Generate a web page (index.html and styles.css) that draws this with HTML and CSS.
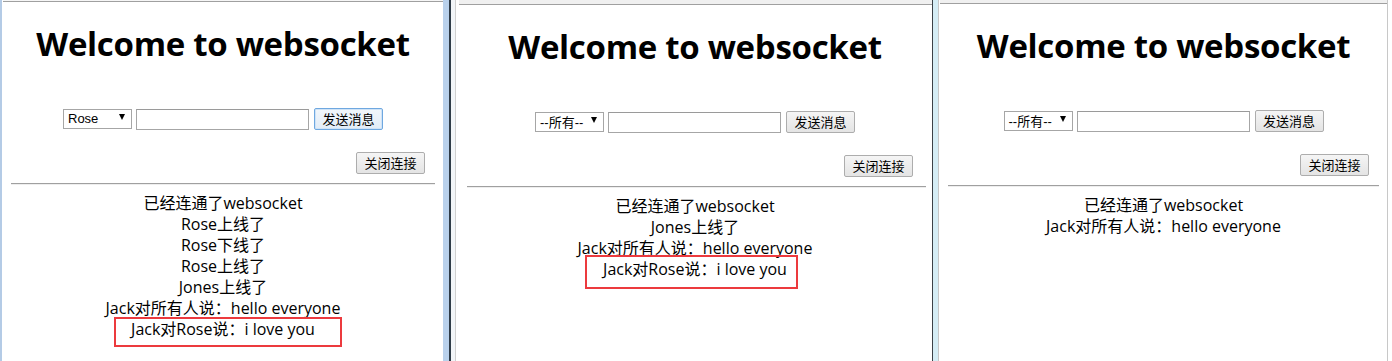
FILE: index.html
```html
<!DOCTYPE html>
<html lang="zh-CN">
<head>
<meta charset="utf-8">
<title>websocket</title>
<link rel="stylesheet" href="styles.css">
</head>
<body>
<div class="screen">
  <div class="edge-left"></div>

  <section class="page page-1">
    <div class="bar bar-1"></div>
    <div class="content">
      <h1 class="title">Welcome to websocket</h1>
      <div class="controls">
        <div class="select"><span class="select-text">Rose</span><span class="arrow"></span></div>
        <div class="input"></div>
        <div class="btn btn-focus">发送消息</div>
      </div>
      <div class="close-row"><div class="btn">关闭连接</div></div>
      <div class="rule"></div>
      <div class="messages">
        <div class="msg">已经连通了websocket</div>
        <div class="msg">Rose上线了</div>
        <div class="msg">Rose下线了</div>
        <div class="msg">Rose上线了</div>
        <div class="msg">Jones上线了</div>
        <div class="msg">Jack对所有人说：hello everyone</div>
        <div class="msg">Jack对Rose说：i love you</div>
      </div>
    </div>
    <div class="mark mark-1"></div>
  </section>

  <div class="sep sep-1"></div>

  <section class="page page-2">
    <div class="bar bar-2"></div>
    <div class="content">
      <h1 class="title">Welcome to websocket</h1>
      <div class="controls">
        <div class="select"><span class="select-text">--所有--</span><span class="arrow"></span></div>
        <div class="input"></div>
        <div class="btn">发送消息</div>
      </div>
      <div class="close-row"><div class="btn">关闭连接</div></div>
      <div class="rule"></div>
      <div class="messages">
        <div class="msg">已经连通了websocket</div>
        <div class="msg">Jones上线了</div>
        <div class="msg">Jack对所有人说：hello everyone</div>
        <div class="msg">Jack对Rose说：i love you</div>
      </div>
    </div>
    <div class="mark mark-2"></div>
  </section>

  <div class="sep sep-2"></div>

  <section class="page page-3">
    <div class="bar bar-3"></div>
    <div class="content">
      <h1 class="title">Welcome to websocket</h1>
      <div class="controls">
        <div class="select"><span class="select-text">--所有--</span><span class="arrow"></span></div>
        <div class="input"></div>
        <div class="btn">发送消息</div>
      </div>
      <div class="close-row"><div class="btn">关闭连接</div></div>
      <div class="rule"></div>
      <div class="messages">
        <div class="msg">已经连通了websocket</div>
        <div class="msg">Jack对所有人说：hello everyone</div>
      </div>
    </div>
  </section>

  <div class="edge-right"></div>
</div>
</body>
</html>
```

FILE: styles.css
```css
html, body {
  margin: 0;
  padding: 0;
  background: #ffffff;
}

.screen {
  display: flex;
  width: 1392px;
  height: 361px;
  overflow: hidden;
  font-family: "Open Sans", "Noto Sans CJK SC", sans-serif;
  color: #000;
}

.edge-left {
  flex: 0 0 3px;
  background: linear-gradient(to right, #b4cbe6 0, #b4cbe6 2px, #ffffff 2px);
}

.edge-right {
  flex: 0 0 5px;
  background: linear-gradient(to right, #c8c8c8 0, #c8c8c8 1px, #ffffff 1px);
}

.sep-1 {
  flex: 0 0 16px;
  background: linear-gradient(to right,
    #b9d1ec 0, #b9d1ec 6px,
    #2e3b47 6px, #2e3b47 8px,
    #f2f5f8 8px, #f2f5f8 12px,
    #cfcfcf 12px, #cfcfcf 13px,
    #ffffff 13px);
}

.sep-2 {
  flex: 0 0 8px;
  background: linear-gradient(to right,
    #3b4146 0, #3b4146 1px,
    #d5edf5 1px, #d5edf5 6px,
    #c6c6c6 6px, #c6c6c6 7px,
    #ffffff 7px);
}

.page {
  position: relative;
  overflow: hidden;
  display: flex;
  flex-direction: column;
}

.page-1 { flex: 0 0 440px; }
.page-2 { flex: 0 0 473px; }
.page-3 { flex: 0 0 447px; }

.bar {
  background: #f0f0f0;
  border-bottom: 1px solid #a0a0a0;
  flex: 0 0 auto;
}
.bar-1 { height: 1px; background: #f6f6f6; }
.bar-2 { height: 4px; }
.bar-3 { height: 3px; }

.content {
  padding: 0 8px;
  text-align: center;
}

.page-2 .content { padding: 0 9px 0 8px; }

.title {
  margin: 22px 0 0;
  font-size: 33px;
  letter-spacing: -0.3px;
  line-height: 40px;
  font-weight: 700;
  white-space: nowrap;
}

.controls {
  margin-top: 44px;
  height: 22px;
  display: flex;
  justify-content: center;
  align-items: center;
  gap: 4px;
}

.select {
  box-sizing: border-box;
  width: 69px;
  height: 20px;
  border: 1px solid #a6a6a6;
  display: flex;
  align-items: center;
  justify-content: space-between;
  padding: 0 6px 0 4px;
  font-family: "Liberation Sans", "Noto Sans CJK SC", sans-serif;
  font-size: 13px;
  text-align: left;
  margin-top: -1px;
}

.arrow {
  width: 0;
  height: 0;
  border-left: 3.5px solid transparent;
  border-right: 3.5px solid transparent;
  border-top: 6px solid #000;
  margin-top: -3px;
}

.input {
  box-sizing: border-box;
  width: 173px;
  height: 21px;
  border: 1px solid #a6a6a6;
  border-top-color: #9a9a9a;
  background: #fff;
  margin-top: 1px;
}

.btn {
  box-sizing: border-box;
  width: 69px;
  height: 22px;
  border: 1px solid #adadad;
  border-radius: 2px;
  background: linear-gradient(#f5f5f5, #e4e4e4);
  font-family: "Noto Sans CJK SC", sans-serif;
  font-size: 13px;
  line-height: 20px;
  text-align: center;
  margin-left: 1px;
}

.btn-focus {
  border-color: #6fa8e0;
  box-shadow: inset 0 0 0 1px #cfe3f7;
  background: linear-gradient(#f1f6fb, #e2ecf7);
}

.close-row {
  margin-top: 22px;
  display: flex;
  justify-content: flex-end;
  padding-right: 10px;
}

.rule {
  margin-top: 9px;
  border-top: 1px solid #a0a0a0;
  border-bottom: 1px solid #eeeeee;
}

.page-2 .rule { margin-right: -3px; }

.messages {
  margin-top: 8px;
  font-size: 16px;
  line-height: 21px;
}

.msg {
  white-space: nowrap;
}

.mark {
  position: absolute;
  box-sizing: border-box;
  border: 2px solid #ec3a3e;
}

.mark-1 {
  left: 111px;
  top: 317px;
  width: 228px;
  height: 30px;
}

.mark-2 {
  left: 126px;
  top: 255px;
  width: 213px;
  height: 34px;
}
```
